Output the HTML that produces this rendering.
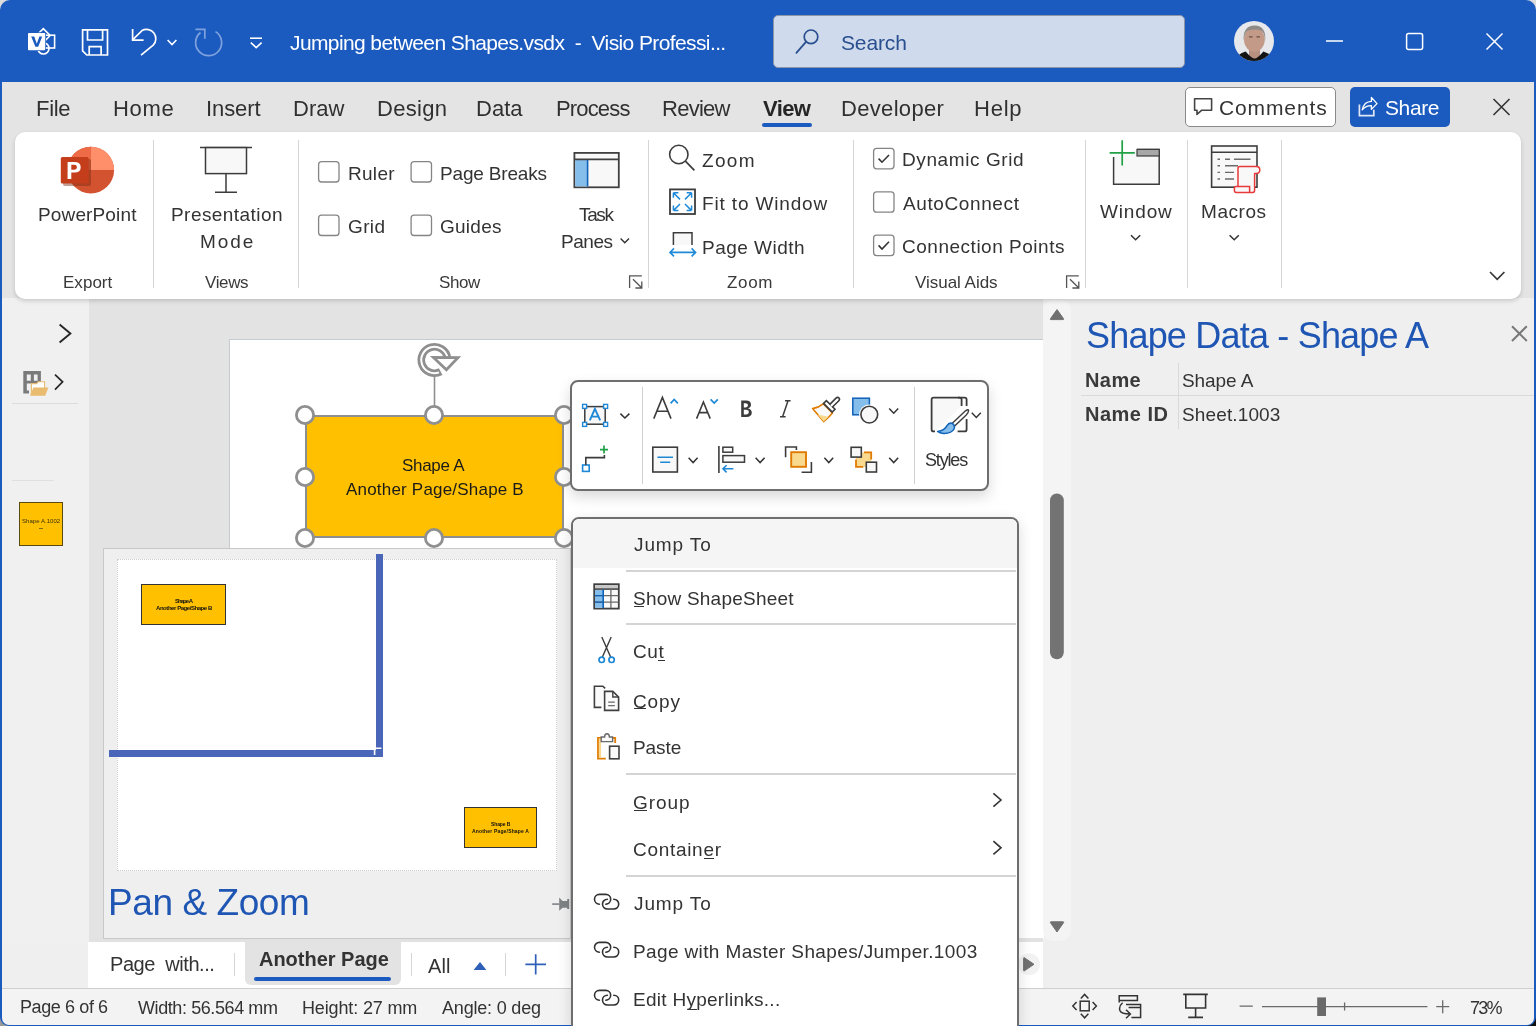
<!DOCTYPE html>
<html><head><meta charset="utf-8"><title>Visio - Jumping between Shapes</title>
<style>
html,body{margin:0;padding:0;width:1536px;height:1026px;overflow:hidden;background:#dcdcdc;}
body{position:relative;-webkit-font-smoothing:antialiased;font-family:'Liberation Sans',sans-serif;}
svg{overflow:visible}
span{will-change:transform}
</style></head><body>
<div style="position:absolute;left:0px;top:1010px;width:16px;height:16px;background:#9a9a9a;"></div>
<div style="position:absolute;left:1520px;top:1010px;width:16px;height:16px;background:#111;"></div>
<div style="position:absolute;left:0px;top:0px;width:1536px;height:1026px;background:#1b5bbf;border-radius:10px 10px 9px 9px;"></div>
<div style="position:absolute;left:2px;top:82px;width:1532px;height:216px;background:#e4e4e4;"></div>
<div style="position:absolute;left:2px;top:298px;width:1532px;height:690px;background:#efefef;"></div>
<div style="position:absolute;left:2px;top:298px;width:87px;height:645px;background:#f0f0f0;"></div>
<div style="position:absolute;left:89px;top:298px;width:954px;height:643px;background:#e3e3e3;"></div>
<div style="position:absolute;left:229px;top:339px;width:814px;height:599px;background:#fff;border-left:1px solid #c6cad1;border-top:1px solid #c6cad1;"></div>
<div style="position:absolute;left:1043px;top:300px;width:28px;height:641px;background:#f4f4f4;border-radius:10px;"></div>
<div style="position:absolute;left:1071px;top:298px;width:463px;height:690px;background:#efefef;"></div>
<div style="position:absolute;left:88px;top:942px;width:955px;height:46px;background:#fff;"></div>
<div style="position:absolute;left:89px;top:938px;width:954px;height:4px;background:#e2e2e2;"></div>
<div style="position:absolute;left:2px;top:988px;width:1532px;height:36px;background:#f3f3f3;border-top:1px solid #cfcfcf;border-radius:0 0 7px 7px;"></div>
<div style="position:absolute;left:15px;top:132px;width:1506px;height:167px;background:#fff;border-radius:10px;box-shadow:0 2px 4px rgba(0,0,0,0.16);"></div>
<span style="position:absolute;left:289.67px;top:32px;font:400 21px/1 'Liberation Sans',sans-serif;color:#ffffff;letter-spacing:-0.607px;white-space:pre;">Jumping between Shapes.vsdx  -  Visio Professi...</span>
<div style="position:absolute;left:773px;top:15px;width:412px;height:53px;background:#cfdaed;border:1px solid #8c96a6;border-radius:5px;box-sizing:border-box;"></div>
<span style="position:absolute;left:841.34px;top:32px;font:400 21px/1 'Liberation Sans',sans-serif;color:#2a4f8f;letter-spacing:-0.140px;white-space:pre;">Search</span>
<span style="position:absolute;left:36.28px;top:98px;font:400 22px/1 'Liberation Sans',sans-serif;color:#303030;letter-spacing:-0.280px;white-space:pre;">File</span>
<span style="position:absolute;left:113.28px;top:98px;font:400 22px/1 'Liberation Sans',sans-serif;color:#303030;letter-spacing:0.642px;white-space:pre;">Home</span>
<span style="position:absolute;left:206.28px;top:98px;font:400 22px/1 'Liberation Sans',sans-serif;color:#303030;letter-spacing:-0.076px;white-space:pre;">Insert</span>
<span style="position:absolute;left:293.28px;top:98px;font:400 22px/1 'Liberation Sans',sans-serif;color:#303030;letter-spacing:0.038px;white-space:pre;">Draw</span>
<span style="position:absolute;left:376.78px;top:98px;font:400 22px/1 'Liberation Sans',sans-serif;color:#303030;letter-spacing:0.295px;white-space:pre;">Design</span>
<span style="position:absolute;left:475.78px;top:98px;font:400 22px/1 'Liberation Sans',sans-serif;color:#303030;letter-spacing:0.036px;white-space:pre;">Data</span>
<span style="position:absolute;left:555.78px;top:98px;font:400 22px/1 'Liberation Sans',sans-serif;color:#303030;letter-spacing:-0.844px;white-space:pre;">Process</span>
<span style="position:absolute;left:662.28px;top:98px;font:400 22px/1 'Liberation Sans',sans-serif;color:#303030;letter-spacing:-0.737px;white-space:pre;">Review</span>
<span style="position:absolute;left:841.28px;top:98px;font:400 22px/1 'Liberation Sans',sans-serif;color:#303030;letter-spacing:0.318px;white-space:pre;">Developer</span>
<span style="position:absolute;left:974.28px;top:98px;font:400 22px/1 'Liberation Sans',sans-serif;color:#303030;letter-spacing:0.788px;white-space:pre;">Help</span>
<span style="position:absolute;left:763.00px;top:98px;font:700 22px/1 'Liberation Sans',sans-serif;color:#262626;letter-spacing:-0.604px;white-space:pre;">View</span>
<div style="position:absolute;left:762px;top:123px;width:50px;height:4px;background:#1b5bbf;border-radius:2px;"></div>
<div style="position:absolute;left:1185px;top:87px;width:151px;height:40px;background:#fff;border:1px solid #8a8a8a;border-radius:5px;box-sizing:border-box;"></div>
<span style="position:absolute;left:1219.02px;top:97px;font:400 21px/1 'Liberation Sans',sans-serif;color:#333333;letter-spacing:0.874px;white-space:pre;">Comments</span>
<div style="position:absolute;left:1350px;top:87px;width:100px;height:40px;background:#1b5bbf;border-radius:5px;"></div>
<span style="position:absolute;left:1385.34px;top:97px;font:400 21px/1 'Liberation Sans',sans-serif;color:#ffffff;letter-spacing:-0.383px;white-space:pre;">Share</span>
<span style="position:absolute;left:37.52px;top:205px;font:400 19px/1 'Liberation Sans',sans-serif;color:#333333;letter-spacing:0.140px;white-space:pre;">PowerPoint</span>
<span style="position:absolute;left:170.52px;top:205px;font:400 19px/1 'Liberation Sans',sans-serif;color:#333333;letter-spacing:0.443px;white-space:pre;">Presentation</span>
<span style="position:absolute;left:199.52px;top:232px;font:400 19px/1 'Liberation Sans',sans-serif;color:#333333;letter-spacing:1.909px;white-space:pre;">Mode</span>
<span style="position:absolute;left:62.67px;top:274px;font:400 17px/1 'Liberation Sans',sans-serif;color:#3a3a3a;letter-spacing:0.028px;white-space:pre;">Export</span>
<span style="position:absolute;left:205.00px;top:274px;font:400 17px/1 'Liberation Sans',sans-serif;color:#3a3a3a;letter-spacing:-0.377px;white-space:pre;">Views</span>
<span style="position:absolute;left:347.52px;top:164px;font:400 19px/1 'Liberation Sans',sans-serif;color:#333333;letter-spacing:0.293px;white-space:pre;">Ruler</span>
<span style="position:absolute;left:439.52px;top:164px;font:400 19px/1 'Liberation Sans',sans-serif;color:#333333;letter-spacing:-0.171px;white-space:pre;">Page Breaks</span>
<span style="position:absolute;left:348.11px;top:217px;font:400 19px/1 'Liberation Sans',sans-serif;color:#333333;letter-spacing:0.354px;white-space:pre;">Grid</span>
<span style="position:absolute;left:440.11px;top:217px;font:400 19px/1 'Liberation Sans',sans-serif;color:#333333;letter-spacing:0.257px;white-space:pre;">Guides</span>
<span style="position:absolute;left:578.70px;top:205px;font:400 19px/1 'Liberation Sans',sans-serif;color:#333333;letter-spacing:-1.356px;white-space:pre;">Task</span>
<span style="position:absolute;left:560.52px;top:232px;font:400 19px/1 'Liberation Sans',sans-serif;color:#333333;letter-spacing:-0.449px;white-space:pre;">Panes</span>
<span style="position:absolute;left:439.47px;top:274px;font:400 17px/1 'Liberation Sans',sans-serif;color:#3a3a3a;letter-spacing:-0.400px;white-space:pre;">Show</span>
<span style="position:absolute;left:702.41px;top:151px;font:400 19px/1 'Liberation Sans',sans-serif;color:#333333;letter-spacing:1.337px;white-space:pre;">Zoom</span>
<span style="position:absolute;left:701.52px;top:194px;font:400 19px/1 'Liberation Sans',sans-serif;color:#333333;letter-spacing:0.847px;white-space:pre;">Fit to Window</span>
<span style="position:absolute;left:701.52px;top:238px;font:400 19px/1 'Liberation Sans',sans-serif;color:#333333;letter-spacing:0.481px;white-space:pre;">Page Width</span>
<span style="position:absolute;left:727.47px;top:274px;font:400 17px/1 'Liberation Sans',sans-serif;color:#3a3a3a;letter-spacing:0.652px;white-space:pre;">Zoom</span>
<span style="position:absolute;left:901.52px;top:150px;font:400 19px/1 'Liberation Sans',sans-serif;color:#333333;letter-spacing:0.589px;white-space:pre;">Dynamic Grid</span>
<span style="position:absolute;left:903.00px;top:194px;font:400 19px/1 'Liberation Sans',sans-serif;color:#333333;letter-spacing:0.608px;white-space:pre;">AutoConnect</span>
<span style="position:absolute;left:902.11px;top:237px;font:400 19px/1 'Liberation Sans',sans-serif;color:#333333;letter-spacing:0.517px;white-space:pre;">Connection Points</span>
<span style="position:absolute;left:915.00px;top:274px;font:400 17px/1 'Liberation Sans',sans-serif;color:#3a3a3a;letter-spacing:-0.026px;white-space:pre;">Visual Aids</span>
<span style="position:absolute;left:1100.00px;top:202px;font:400 19px/1 'Liberation Sans',sans-serif;color:#333333;letter-spacing:0.838px;white-space:pre;">Window</span>
<span style="position:absolute;left:1200.52px;top:202px;font:400 19px/1 'Liberation Sans',sans-serif;color:#333333;letter-spacing:0.558px;white-space:pre;">Macros</span>
<div style="position:absolute;left:153px;top:140px;width:1px;height:148px;background:#d6d6d6;"></div>
<div style="position:absolute;left:298px;top:140px;width:1px;height:148px;background:#d6d6d6;"></div>
<div style="position:absolute;left:648px;top:140px;width:1px;height:148px;background:#d6d6d6;"></div>
<div style="position:absolute;left:853px;top:140px;width:1px;height:148px;background:#d6d6d6;"></div>
<div style="position:absolute;left:1085px;top:140px;width:1px;height:148px;background:#d6d6d6;"></div>
<div style="position:absolute;left:1187px;top:140px;width:1px;height:148px;background:#d6d6d6;"></div>
<div style="position:absolute;left:1281px;top:140px;width:1px;height:148px;background:#d6d6d6;"></div>
<div style="position:absolute;left:12px;top:403px;width:66px;height:1px;background:#dcdcdc;"></div>
<div style="position:absolute;left:12px;top:480px;width:42px;height:1px;background:#e0e0e0;"></div>
<div style="position:absolute;left:19px;top:502px;width:44px;height:44px;background:#ffc000;border:1px solid #5a4a10;box-sizing:border-box;"></div>
<div style="position:absolute;left:305px;top:415px;width:259px;height:123px;background:#ffc000;border:2px solid #8f8f8f;box-sizing:border-box;"></div>
<span style="position:absolute;left:402.47px;top:457px;font:400 17px/1 'Liberation Sans',sans-serif;color:#1a1a1a;letter-spacing:-0.295px;white-space:pre;">Shape A</span>
<span style="position:absolute;left:346.00px;top:481px;font:400 17px/1 'Liberation Sans',sans-serif;color:#1a1a1a;letter-spacing:0.200px;white-space:pre;">Another Page/Shape B</span>
<span style="position:absolute;left:1085.88px;top:318px;font:400 36px/1 'Liberation Sans',sans-serif;color:#1f56b4;letter-spacing:-0.805px;white-space:pre;">Shape Data - Shape A</span>
<span style="position:absolute;left:1084.75px;top:370px;font:700 20px/1 'Liberation Sans',sans-serif;color:#3a3a3a;letter-spacing:0.425px;white-space:pre;">Name</span>
<span style="position:absolute;left:1084.75px;top:404px;font:700 20px/1 'Liberation Sans',sans-serif;color:#3a3a3a;letter-spacing:0.486px;white-space:pre;">Name ID</span>
<span style="position:absolute;left:1182.41px;top:371px;font:400 19px/1 'Liberation Sans',sans-serif;color:#333333;letter-spacing:-0.065px;white-space:pre;">Shape A</span>
<span style="position:absolute;left:1182.41px;top:405px;font:400 19px/1 'Liberation Sans',sans-serif;color:#333333;letter-spacing:0.129px;white-space:pre;">Sheet.1003</span>
<div style="position:absolute;left:1081px;top:395px;width:453px;height:1px;background:#d9d9d9;"></div>
<div style="position:absolute;left:1178px;top:363px;width:1px;height:66px;background:#d9d9d9;"></div>
<div style="position:absolute;left:103px;top:548px;width:468px;height:391px;background:#efefef;border:1px solid #c8c8c8;box-sizing:border-box;"></div>
<div style="position:absolute;left:117px;top:559px;width:440px;height:312px;background:#fff;border:1px dotted #cfcfcf;box-sizing:border-box;"></div>
<div style="position:absolute;left:141px;top:584px;width:85px;height:41px;background:#ffc000;border:1px solid #333;box-sizing:border-box;"></div>
<div style="position:absolute;left:464px;top:807px;width:73px;height:41px;background:#ffc000;border:1px solid #333;box-sizing:border-box;"></div>
<div style="position:absolute;left:376px;top:554px;width:7px;height:203px;background:#4a66b8;"></div>
<div style="position:absolute;left:109px;top:750px;width:274px;height:7px;background:#4a66b8;"></div>
<span style="position:absolute;left:108.11px;top:884px;font:400 37px/1 'Liberation Sans',sans-serif;color:#1f56b4;letter-spacing:-0.427px;white-space:pre;">Pan &amp; Zoom</span>
<svg style="position:absolute;left:360px;top:735px;" width="40" height="30" viewBox="0 0 40 30" fill="none"><path d="M16 13.3 H21.4 M14.6 14 V20" stroke="#fff" stroke-width="1.6"/></svg>
<span style="position:absolute;left:109.94px;top:954px;font:400 20px/1 'Liberation Sans',sans-serif;color:#333333;letter-spacing:-0.432px;white-space:pre;">Page  with...</span>
<div style="position:absolute;left:234px;top:953px;width:1px;height:23px;background:#d6d6d6;"></div>
<div style="position:absolute;left:245px;top:942px;width:156px;height:43px;background:#e3e3e3;border-radius:0 0 6px 6px;"></div>
<span style="position:absolute;left:258.69px;top:949px;font:700 20px/1 'Liberation Sans',sans-serif;color:#333333;letter-spacing:-0.019px;white-space:pre;">Another Page</span>
<div style="position:absolute;left:254px;top:977px;width:137px;height:4px;background:#1b5bbf;border-radius:2px;"></div>
<div style="position:absolute;left:411px;top:953px;width:1px;height:23px;background:#d6d6d6;"></div>
<span style="position:absolute;left:428.00px;top:956px;font:400 20px/1 'Liberation Sans',sans-serif;color:#333333;letter-spacing:0.046px;white-space:pre;">All</span>
<div style="position:absolute;left:505px;top:953px;width:1px;height:23px;background:#d6d6d6;"></div>
<span style="position:absolute;left:19.59px;top:998px;font:400 18px/1 'Liberation Sans',sans-serif;color:#333;letter-spacing:-0.394px;white-space:pre;">Page 6 of 6</span>
<span style="position:absolute;left:138.00px;top:999px;font:400 18px/1 'Liberation Sans',sans-serif;color:#333;letter-spacing:-0.408px;white-space:pre;">Width: 56.564 mm</span>
<span style="position:absolute;left:301.59px;top:999px;font:400 18px/1 'Liberation Sans',sans-serif;color:#333;letter-spacing:-0.142px;white-space:pre;">Height: 27 mm</span>
<span style="position:absolute;left:442.00px;top:999px;font:400 18px/1 'Liberation Sans',sans-serif;color:#333;letter-spacing:-0.188px;white-space:pre;">Angle: 0 deg</span>
<span style="position:absolute;left:1470.16px;top:999px;font:400 18px/1 'Liberation Sans',sans-serif;color:#333;letter-spacing:-1.823px;white-space:pre;">73%</span>
<svg style="position:absolute;left:0px;top:0px;" width="80" height="70" viewBox="0 0 80 70" fill="none">
<path d="M43.3 28.6 L50.2 35.5 L43.3 42.4 L36.4 35.5 Z" stroke="#fff" stroke-width="1.6"/>
<rect x="45" y="35.2" width="9.6" height="12.8" stroke="#fff" stroke-width="1.6"/>
<circle cx="43.4" cy="48.4" r="5.6" stroke="#fff" stroke-width="1.6"/>
<rect x="28" y="33" width="17.2" height="17.2" fill="#fff" rx="0.8" stroke="#1b5bbf" stroke-width="1.4" paint-order="stroke"/>
<path d="M31.2 36.4 L35.4 46.8 H38.2 L42.2 36.4 H39.4 L36.8 43.8 L34.2 36.4 Z" fill="#1b5bbf"/>
</svg>
<svg style="position:absolute;left:0px;top:0px;" width="120" height="70" viewBox="0 0 120 70" fill="none">
<path d="M82.6 29.9 H107.5 V55 H86.8 L82.6 50.8 Z" stroke="#fff" stroke-width="1.7" stroke-linejoin="miter"/>
<path d="M87.5 29.9 V40 H102.6 V29.9" stroke="#fff" stroke-width="1.7"/>
<path d="M89.2 55 V46.7 H101.1 V55" stroke="#fff" stroke-width="1.7"/>
</svg>
<svg style="position:absolute;left:0px;top:0px;" width="190" height="70" viewBox="0 0 190 70" fill="none">
<path d="M132.6 29 V40.2 H143.6" stroke="#fff" stroke-width="1.7"/>
<path d="M132.8 39.6 L142 30.6 A9.3 9.3 0 0 1 153.2 45.2 L141 55.2" stroke="#fff" stroke-width="1.7"/>
<path d="M167.6 40 L172 44.5 L176.4 40" stroke="#fff" stroke-width="1.6"/>
</svg>
<svg style="position:absolute;left:0px;top:0px;" width="270" height="70" viewBox="0 0 270 70" fill="none">
<path d="M215.5 31.6 A13 13 0 1 1 200.5 32.5" stroke="#7fa2de" stroke-width="1.7"/>
<path d="M195.4 29.4 H204.8 V38.8" stroke="#7fa2de" stroke-width="1.7"/>
<path d="M250 38.2 H262" stroke="#fff" stroke-width="1.6"/>
<path d="M250.8 42.6 L256.2 47.6 L261.6 42.6" stroke="#fff" stroke-width="1.6"/>
</svg>
<svg style="position:absolute;left:780px;top:20px;" width="50" height="40" viewBox="0 0 50 40" fill="none">
<circle cx="31" cy="16.8" r="6.8" stroke="#2a4f8f" stroke-width="1.7"/>
<path d="M26.2 21.6 L16.4 32.8" stroke="#2a4f8f" stroke-width="1.8" stroke-linecap="round"/>
</svg>
<svg style="position:absolute;left:1230px;top:17px;" width="50" height="50" viewBox="0 0 50 50" fill="none">
<defs><clipPath id="av"><circle cx="24" cy="24" r="20"/></clipPath></defs>
<g clip-path="url(#av)">
<rect x="0" y="0" width="50" height="50" fill="#e6e8eb"/>
<rect x="19" y="30" width="11" height="12" fill="#b89080"/>
<ellipse cx="24.4" cy="22.6" rx="10.4" ry="12.2" fill="#c39a88"/>
<path d="M13.6 24 Q12.6 9 24.6 8.6 Q36.4 9 35.2 24 Q34.4 15 31 13.6 Q25 11.6 18 13.6 Q14.6 15 13.6 24 Z" fill="#8d8a87"/>
<path d="M19 19.8 H22.6 M26.4 19.8 H30" stroke="#6e5247" stroke-width="1.2"/>
<path d="M2 50 Q4 38 15.6 34.4 Q22 41.6 24.6 41.6 Q27.2 41.6 33.4 34.4 Q45 38 47 50 Z" fill="#141414"/>
</g></svg>
<svg style="position:absolute;left:1320px;top:25px;" width="200" height="40" viewBox="0 0 200 40" fill="none">
<path d="M6 16 H23" stroke="#fff" stroke-width="1.5"/>
<rect x="86.6" y="8.6" width="16" height="16" rx="2" stroke="#fff" stroke-width="1.5"/>
<path d="M166.5 8.5 L182.5 24.5 M182.5 8.5 L166.5 24.5" stroke="#fff" stroke-width="1.5"/>
</svg>
<svg style="position:absolute;left:1185px;top:85px;" width="350" height="45" viewBox="0 0 350 45" fill="none">
<path d="M9.6 13.8 H26.6 V25.2 H16.8 L12 29.4 V25.2 H9.6 Z" stroke="#444" stroke-width="1.6" stroke-linejoin="round"/>
<path d="M174.4 19.4 V30.6 H188.8 V24.8" stroke="#dfe7f5" stroke-width="1.7"/>
<path d="M177.2 24.8 Q179 16.6 186.4 16.4 V12.4 L192 18.6 L186.4 24.4 V20.6 Q180.6 20.6 177.2 24.8 Z" stroke="#fff" stroke-width="1.3" stroke-linejoin="round"/>
<path d="M308.5 14 L324.5 30 M324.5 14 L308.5 30" stroke="#333" stroke-width="1.6"/>
</svg>
<svg style="position:absolute;left:0px;top:0px;" width="700" height="300" viewBox="0 0 700 300" fill="none">
<!-- PowerPoint -->
<circle cx="90.8" cy="170.1" r="23.3" fill="#d35230"/>
<path d="M90.8 170.1 V146.8 A23.3 23.3 0 0 1 114.1 170.1 Z" fill="#ff8f6b"/>
<path d="M90.8 170.1 V146.8 A23.3 23.3 0 0 0 67.5 170.1 Z" fill="#ed6c47"/>
<rect x="63" y="159" width="28" height="27" rx="2" fill="#7a2a12" opacity="0.45"/>
<rect x="60.8" y="157" width="27.8" height="26.6" rx="1.6" fill="#c43e1c"/>
<path d="M67.6 178.9 V161.9 H74.4 Q80.7 161.9 80.7 167.3 Q80.7 172.6 74.4 172.6 H71.3 V178.9 Z M71.3 164.8 V169.7 H73.9 Q76.9 169.7 76.9 167.25 Q76.9 164.8 73.9 164.8 Z" fill="#fff" fill-rule="evenodd"/>
<!-- Presentation mode -->
<path d="M200 147.6 H252" stroke="#3c3c3c" stroke-width="1.5"/>
<rect x="205.5" y="147.6" width="41" height="26" fill="#f8f8f8" stroke="#3c3c3c" stroke-width="1.5"/>
<path d="M226 173.6 V192 M215 192.2 H237" stroke="#3c3c3c" stroke-width="1.5"/>
<!-- checkboxes -->
<rect x="318.6" y="161.6" width="20.4" height="20.4" rx="3" stroke="#858585" stroke-width="1.3"/>
<rect x="411.1" y="161.6" width="20.4" height="20.4" rx="3" stroke="#858585" stroke-width="1.3"/>
<rect x="318.6" y="215.1" width="20.4" height="20.4" rx="3" stroke="#858585" stroke-width="1.3"/>
<rect x="411.1" y="215.1" width="20.4" height="20.4" rx="3" stroke="#858585" stroke-width="1.3"/>
<!-- task panes -->
<rect x="574.4" y="152.9" width="44.4" height="34.4" fill="#f8f8f8" stroke="#404040" stroke-width="1.8"/>
<rect x="575.3" y="159.8" width="12" height="26.6" fill="#85bdeb"/>
<path d="M574.4 159.4 H618.8" stroke="#404040" stroke-width="1.6"/>
<path d="M587.6 160 V186.5" stroke="#0f62b8" stroke-width="1.6"/>
<path d="M620.6 238.6 L624.8 242.8 L629 238.6" stroke="#333" stroke-width="1.4"/>
<!-- launcher show -->
<path d="M629.6 288 V275.8 H641.8" stroke="#555" stroke-width="1.3"/>
<path d="M633 279.2 L641.6 287.8 M641.8 281.6 V288 H635.4" stroke="#555" stroke-width="1.3"/>
<!-- zoom -->
<circle cx="678.8" cy="154.5" r="9.2" stroke="#3c3c3c" stroke-width="1.6"/>
<path d="M685.4 161.1 L694.4 170.3" stroke="#3c3c3c" stroke-width="1.7"/>
<!-- fit to window -->
<rect x="670" y="189.4" width="25" height="24.6" stroke="#3c3c3c" stroke-width="1.8"/>
<path d="M673.4 192.8 L680 199.4 M673.4 192.8 H678.4 M673.4 192.8 V197.8
 M691.6 192.8 L685 199.4 M691.6 192.8 H686.6 M691.6 192.8 V197.8
 M673.4 210.6 L680 204 M673.4 210.6 H678.4 M673.4 210.6 V205.6
 M691.6 210.6 L685 204 M691.6 210.6 H686.6 M691.6 210.6 V205.6" stroke="#1f8ad8" stroke-width="1.5"/>
<!-- page width -->
<path d="M673.4 245 V232.8 H692 V245" stroke="#3c3c3c" stroke-width="1.5" fill="#f8f8f8"/>
<path d="M670 252.4 H695.6 M674 248.4 L670 252.4 L674 256.4 M691.6 248.4 L695.6 252.4 L691.6 256.4" stroke="#1f8ad8" stroke-width="1.6"/>
</svg>
<svg style="position:absolute;left:0px;top:0px;" width="1536" height="300" viewBox="0 0 1536 300" fill="none">
<!-- visual aids checkboxes -->
<rect x="873.6" y="148.4" width="20.4" height="20.4" rx="3" stroke="#858585" stroke-width="1.3"/>
<path d="M878.6 158.6 L882 162.2 L889 155" stroke="#333" stroke-width="1.6"/>
<rect x="873.6" y="191.8" width="20.4" height="20.4" rx="3" stroke="#858585" stroke-width="1.3"/>
<rect x="873.6" y="235.2" width="20.4" height="20.4" rx="3" stroke="#858585" stroke-width="1.3"/>
<path d="M878.6 245.4 L882 249 L889 241.8" stroke="#333" stroke-width="1.6"/>
<!-- launcher visual aids -->
<path d="M1066.6 288 V275.8 H1078.8" stroke="#555" stroke-width="1.3"/>
<path d="M1070 279.2 L1078.6 287.8 M1078.8 281.6 V288 H1072.4" stroke="#555" stroke-width="1.3"/>
<!-- window -->
<path d="M1113.6 157 V184.2 H1159.2 V149.4 H1137" stroke="#3c3c3c" stroke-width="1.5" fill="#f8f8f8"/>
<rect x="1137" y="149.4" width="22.2" height="6.6" fill="#a8a8a8" stroke="#3c3c3c" stroke-width="1.2"/>
<path d="M1109.6 152.8 H1134.8 M1122.2 140.2 V165.4" stroke="#22a045" stroke-width="1.7"/>
<path d="M1131 235.2 L1135.6 239.8 L1140.2 235.2" stroke="#333" stroke-width="1.5"/>
<!-- macros -->
<rect x="1211.6" y="146" width="45.4" height="41.2" fill="#f8f8f8" stroke="#3c3c3c" stroke-width="1.6"/>
<path d="M1211.6 152.2 H1257" stroke="#3c3c3c" stroke-width="1.6"/>
<path d="M1217.5 159.2 H1220 M1225 159.2 H1230 M1234 159.2 H1250.5 M1217.5 165.8 H1220 M1225 165.8 H1238 M1217.5 172.4 H1220 M1225 172.4 H1234 M1217.5 179 H1220 M1225 179 H1234" stroke="#6a6a6a" stroke-width="1.4"/>
<path d="M1238 168 Q1238 166.6 1240 166.6 H1256.4 Q1259.8 166.6 1259.8 170 Q1259.8 173.4 1256.4 173.4 H1254.6 V190.6 Q1254.6 192.4 1252.8 192.4 H1236.2 Q1234.4 192.4 1234.4 190.6 V188 Q1234.4 186.6 1236 186.6 H1238 Z" fill="#f8f8f8" stroke="#e83a3a" stroke-width="1.5" stroke-linejoin="round"/>
<path d="M1249.6 192.2 V186.6 H1238" stroke="#e83a3a" stroke-width="1.5"/>
<path d="M1229.6 235.2 L1234.2 239.8 L1238.8 235.2" stroke="#333" stroke-width="1.5"/>
<!-- collapse ribbon -->
<path d="M1490 272 L1497.2 279.4 L1504.4 272" stroke="#333" stroke-width="1.6"/>
</svg>
<svg style="position:absolute;left:0px;top:0px;" width="1536" height="1026" viewBox="0 0 1536 1026" fill="none">
<!-- shape data close -->
<path d="M1512 326.2 L1526.8 341 M1526.8 326.2 L1512 341" stroke="#787878" stroke-width="2"/>
<!-- scroll arrows -->
<path d="M1057 309.6 L1063.6 318.8 Q1064 319.6 1063 319.6 H1051 Q1050 319.6 1050.4 318.8 Z" fill="#707070" stroke="#707070" stroke-width="1" stroke-linejoin="round"/>
<rect x="1050" y="493.5" width="13.8" height="165.7" rx="6.9" fill="#737373"/>
<path d="M1057 932 L1063.6 922.6 Q1064 921.8 1063 921.8 H1051 Q1050 921.8 1050.4 922.6 Z" fill="#707070" stroke="#707070" stroke-width="1" stroke-linejoin="round"/>
<circle cx="1029" cy="964.3" r="11" fill="#f2f2f2"/>
<path d="M1034 964.3 L1024.4 957.8 Q1023.6 957.4 1023.6 958.4 V970.2 Q1023.6 971.2 1024.4 970.8 Z" fill="#707070" stroke="#707070" stroke-width="1" stroke-linejoin="round"/>
<!-- pan zoom pin -->
<path d="M552.2 904.1 H559.5" stroke="#7f8386" stroke-width="1.6"/>
<path d="M559.2 897.6 L562.6 901 H568 V907.8 H562.6 L559.2 910.7 Z" fill="#7f8386"/>
<rect x="567.2" y="899" width="2" height="10" fill="#7f8386"/>
<!-- page tabs -->
<path d="M473.6 970 L480 962 L486.4 970 Z" fill="#2f5fb8"/>
<path d="M525.4 964.4 H546 M535.7 954.2 V974.6" stroke="#2f5fb8" stroke-width="1.7"/>
<!-- status bar icons -->
<rect x="1080.2" y="1001.2" width="9" height="9.6" stroke="#333" stroke-width="1.5"/>
<path d="M1080.8 998.4 L1084.6 994.4 L1088.4 998.4 M1080.8 1013.8 L1084.6 1017.8 L1088.4 1013.8 M1076.6 1002 L1072.8 1006 L1076.6 1010 M1092.6 1002 L1096.4 1006 L1092.6 1010" stroke="#333" stroke-width="1.5"/>
<path d="M1119.2 1002.6 V995.8 H1137.4 V1001.2 M1119.2 1000.6 H1137.4" stroke="#333" stroke-width="1.5"/>
<path d="M1126 1004.4 H1140.6 V1017.4 H1131.4 M1128.6 1007.6 H1140.6" stroke="#333" stroke-width="1.5"/>
<path d="M1122.6 1002.8 Q1118.8 1006 1119.8 1010.2 Q1121 1014 1130 1014 M1126 1009.8 L1130.4 1014 L1126 1018.2" stroke="#333" stroke-width="1.5"/>
<path d="M1183.2 994.4 H1207.8 M1185.8 994.4 V1008 H1205.6 V994.4 M1195.6 1008 V1017.2 M1188.2 1017.4 H1203" stroke="#333" stroke-width="1.6"/>
<path d="M1239.6 1006.2 H1252.8 M1262 1006.6 H1427.4 M1344.6 1002.6 V1010.6 M1436.2 1006.6 H1449.2 M1442.7 1000.2 V1013.2" stroke="#6a6a6a" stroke-width="1.3"/>
<rect x="1317.2" y="997.4" width="8.8" height="18.6" fill="#6a6a6a"/>
</svg>
<span style="position:absolute;left:174.91px;top:598px;font:700 6px/1 'Liberation Sans',sans-serif;color:#111;letter-spacing:-0.966px;white-space:pre;">Shape A</span>
<span style="position:absolute;left:155.91px;top:605px;font:700 6px/1 'Liberation Sans',sans-serif;color:#111;letter-spacing:-0.441px;white-space:pre;">Another Page/Shape B</span>
<span style="position:absolute;left:490.92px;top:822px;font:700 5px/1 'Liberation Sans',sans-serif;color:#111;letter-spacing:-0.126px;white-space:pre;">Shape B</span>
<span style="position:absolute;left:471.92px;top:829px;font:700 5px/1 'Liberation Sans',sans-serif;color:#111;letter-spacing:0.172px;white-space:pre;">Another Page/Shape A</span>
<svg style="position:absolute;left:0px;top:290px;" width="100" height="270" viewBox="0 0 100 270" fill="none">
<path d="M59.6 34.6 L70.4 43.6 L59.6 52.6" stroke="#262626" stroke-width="1.9"/>
<path d="M23.3 81.1 H40.9 V93.4 H26.8 V100.4 H29 V103.5 H23.3 Z M26.8 84.6 V90.8 H30.8 V84.6 Z M33.9 84.6 V90.8 H37.6 V84.6 Z" fill="#7a7a7a" fill-rule="evenodd"/>
<path d="M31.4 104 V93.6 H36.6 L38.2 91.8 H44.6 V98" fill="#fff" stroke="#e8bb6f" stroke-width="1.1"/>
<path d="M30 105.7 L33.4 97.6 H48.4 L45.2 105.7 Z" fill="#e8bb6f"/>
<path d="M55 84.6 L62.6 91.8 L55 99.6" stroke="#262626" stroke-width="1.7"/>
</svg>
<span style="position:absolute;left:21.81px;top:518px;font:400 6px/1 'Liberation Sans',sans-serif;color:#3a3010;letter-spacing:0.036px;white-space:pre;">Shape A.1002</span>
<div style="position:absolute;left:39px;top:528px;width:4px;height:1px;background:#8a6a10;"></div>
<svg style="position:absolute;left:380px;top:330px;" width="220" height="230" viewBox="0 0 220 230" fill="none">
<path d="M60.7 41.65 A13.2 13.2 0 1 1 67.57 28.16" stroke="#8f8f8f" stroke-width="7.6"/>
<path d="M59.01 42.4 A13.2 13.2 0 1 1 67.31 26.81" stroke="#fff" stroke-width="2"/>
<path d="M53.4 27.4 L78 27.6 L66.4 39.8 Z" fill="#fff" stroke="#8f8f8f" stroke-width="2.8" stroke-linejoin="miter"/>
<path d="M54.5 46.5 V76" stroke="#8f8f8f" stroke-width="1.6"/>
</svg>
<svg style="position:absolute;left:280px;top:390px;" width="310" height="170" viewBox="0 0 310 170" fill="none"><circle cx="25" cy="25" r="8.6" fill="#fff" stroke="#8f8f8f" stroke-width="2.8"/><circle cx="154" cy="25" r="8.6" fill="#fff" stroke="#8f8f8f" stroke-width="2.8"/><circle cx="284" cy="25" r="8.6" fill="#fff" stroke="#8f8f8f" stroke-width="2.8"/><circle cx="25" cy="87" r="8.6" fill="#fff" stroke="#8f8f8f" stroke-width="2.8"/><circle cx="284" cy="87" r="8.6" fill="#fff" stroke="#8f8f8f" stroke-width="2.8"/><circle cx="25" cy="148" r="8.6" fill="#fff" stroke="#8f8f8f" stroke-width="2.8"/><circle cx="154" cy="148" r="8.6" fill="#fff" stroke="#8f8f8f" stroke-width="2.8"/><circle cx="284" cy="148" r="8.6" fill="#fff" stroke="#8f8f8f" stroke-width="2.8"/></svg>
<div style="position:absolute;left:570px;top:380px;width:419px;height:111px;background:#fff;border:2px solid #6e6e6e;border-radius:8px;box-sizing:border-box;box-shadow:0 6px 14px rgba(0,0,0,0.15);"></div>
<div style="position:absolute;left:642px;top:387px;width:1px;height:97px;background:#d0d0d0;"></div>
<div style="position:absolute;left:914px;top:387px;width:1px;height:97px;background:#d0d0d0;"></div>
<span style="position:absolute;left:925.44px;top:451px;font:400 18px/1 'Liberation Sans',sans-serif;color:#333333;letter-spacing:-1.178px;white-space:pre;">Styles</span>
<div style="position:absolute;left:571px;top:517px;width:448px;height:520px;background:#fff;border:2px solid #6e6e6e;border-radius:8px;box-sizing:border-box;box-shadow:0 4px 14px rgba(0,0,0,0.14);"></div>
<div style="position:absolute;left:573px;top:519px;width:444px;height:49px;background:#f5f5f5;border-radius:6px 6px 0 0;"></div>
<div style="position:absolute;left:626px;top:570px;width:390px;height:2px;background:#d4d4d4;"></div>
<div style="position:absolute;left:626px;top:623px;width:390px;height:2px;background:#d4d4d4;"></div>
<div style="position:absolute;left:626px;top:773px;width:390px;height:2px;background:#d4d4d4;"></div>
<div style="position:absolute;left:626px;top:875px;width:390px;height:2px;background:#d4d4d4;"></div>
<span style="position:absolute;left:633.70px;top:535px;font:400 19px/1 'Liberation Sans',sans-serif;color:#333333;letter-spacing:0.877px;white-space:pre;">Jump To</span>
<span style="position:absolute;left:633.41px;top:589px;font:400 19px/1 'Liberation Sans',sans-serif;color:#333333;letter-spacing:0.224px;white-space:pre;">Show ShapeSheet</span>
<span style="position:absolute;left:633.11px;top:642px;font:400 19px/1 'Liberation Sans',sans-serif;color:#333333;letter-spacing:0.629px;white-space:pre;">Cut</span>
<span style="position:absolute;left:633.11px;top:692px;font:400 19px/1 'Liberation Sans',sans-serif;color:#333333;letter-spacing:0.845px;white-space:pre;">Copy</span>
<span style="position:absolute;left:632.52px;top:738px;font:400 19px/1 'Liberation Sans',sans-serif;color:#333333;letter-spacing:-0.083px;white-space:pre;">Paste</span>
<span style="position:absolute;left:633.11px;top:793px;font:400 19px/1 'Liberation Sans',sans-serif;color:#333333;letter-spacing:0.964px;white-space:pre;">Group</span>
<span style="position:absolute;left:633.11px;top:840px;font:400 19px/1 'Liberation Sans',sans-serif;color:#333333;letter-spacing:0.700px;white-space:pre;">Container</span>
<span style="position:absolute;left:633.70px;top:894px;font:400 19px/1 'Liberation Sans',sans-serif;color:#333333;letter-spacing:0.877px;white-space:pre;">Jump To</span>
<span style="position:absolute;left:632.52px;top:942px;font:400 19px/1 'Liberation Sans',sans-serif;color:#333333;letter-spacing:0.371px;white-space:pre;">Page with Master Shapes/Jumper.1003</span>
<span style="position:absolute;left:632.52px;top:990px;font:400 19px/1 'Liberation Sans',sans-serif;color:#333333;letter-spacing:0.274px;white-space:pre;">Edit Hyperlinks...</span>
<svg style="position:absolute;left:0px;top:0px;" width="1536" height="1026" viewBox="0 0 1536 1026" fill="none">
<!-- text box -->
<rect x="584.8" y="406.6" width="20.4" height="17.6" fill="#f8f8f8" stroke="#3c3c3c" stroke-width="1.5"/>
<path d="M589.8 420.4 L594.9 408.8 L600.2 420.4 M591.6 416.6 H598.4" stroke="#1e88d6" stroke-width="1.9"/>
<rect x="582.6" y="404.4" width="4" height="4" fill="#fff" stroke="#1e88d6" stroke-width="1.4"/>
<rect x="603.6" y="404.4" width="4" height="4" fill="#fff" stroke="#1e88d6" stroke-width="1.4"/>
<rect x="582.6" y="422.4" width="4" height="4" fill="#fff" stroke="#1e88d6" stroke-width="1.4"/>
<rect x="603.6" y="422.4" width="4" height="4" fill="#fff" stroke="#1e88d6" stroke-width="1.4"/>
<path d="M620.4 413.6 L624.9 418 L629.4 413.6" stroke="#333" stroke-width="1.5"/>
<!-- connector -->
<rect x="582.6" y="465" width="6.6" height="6.4" stroke="#1e88d6" stroke-width="1.6" fill="#fff"/>
<path d="M585.8 465 V457.6 H604.4 V455" stroke="#3c3c3c" stroke-width="1.6"/>
<path d="M600 449.6 H608 M604 445.6 V453.6" stroke="#22a045" stroke-width="1.7"/>
<!-- grow font -->
<path d="M653.8 418.6 L662.4 397.4 L671 418.6 M657 411.2 H667.8" stroke="#3c3c3c" stroke-width="1.6"/>
<path d="M670.6 403.4 L674.2 399.4 L677.8 403.4" stroke="#1e88d6" stroke-width="1.7"/>
<!-- shrink font -->
<path d="M696.6 418.6 L703.4 402 L710.2 418.6 M699.2 412.6 H707.8" stroke="#3c3c3c" stroke-width="1.6"/>
<path d="M710.6 399.4 L714.2 403 L717.8 399.4" stroke="#1e88d6" stroke-width="1.7"/>
<!-- bold / italic -->
<path d="M741.2 400.6 H746 Q751 400.6 751 404.8 Q751 407.6 748 408.4 Q751.8 409.2 751.8 412.6 Q751.8 417 746.4 417 H741.2 Z M743.8 403.2 V407.4 H745.6 Q748 407.4 748 405.3 Q748 403.2 745.6 403.2 Z M743.8 409.8 V414.4 H746 Q748.8 414.4 748.8 412.1 Q748.8 409.8 746 409.8 Z" fill="#3c3c3c" fill-rule="evenodd"/>
<path d="M785 400.8 H790.6 M780 416.8 H785.6 M788 400.8 L782.6 416.8" stroke="#3c3c3c" stroke-width="1.5"/>
<!-- format painter -->
<path d="M812.6 408.6 Q818.6 407.6 823.2 403.8 L832.4 413 Q828.4 418 823.6 421.6 Z" fill="#fafafa" stroke="#e07b00" stroke-width="1.6" stroke-linejoin="round"/>
<path d="M817.6 414.4 L828.6 416.8 L823.6 421.4 Z" fill="#f8d98e"/>
<path d="M823.6 403.4 L826.4 400.6 L835 409.2 L832.2 412 Z" fill="#fff" stroke="#3c3c3c" stroke-width="1.6"/>
<path d="M829.6 404.6 L836 398.2 Q837.8 396.6 839 398 Q840.2 399.4 838.6 401 L832.2 407.2" fill="#fff" stroke="#3c3c3c" stroke-width="1.6"/>
<!-- fill / shape -->
<rect x="852.8" y="398.2" width="16.6" height="16.6" fill="#85bdeb" stroke="#0f62b8" stroke-width="1.5"/>
<circle cx="869.3" cy="414.6" r="10.2" fill="#fff"/>
<circle cx="869.3" cy="414.6" r="8.4" fill="#f8f8f8" stroke="#3c3c3c" stroke-width="1.6"/>
<path d="M889.2 408.6 L893.7 413.2 L898.2 408.6" stroke="#333" stroke-width="1.5"/>
<!-- text align -->
<rect x="652.8" y="447.2" width="24.6" height="24.8" fill="#f8f8f8" stroke="#3c3c3c" stroke-width="1.6"/>
<path d="M657.4 457.2 H673 M660.2 462.2 H670.2" stroke="#1e88d6" stroke-width="1.6"/>
<path d="M688.6 457.8 L693.1 462.6 L697.6 457.8" stroke="#333" stroke-width="1.5"/>
<!-- align -->
<path d="M718.9 446 V473" stroke="#3c3c3c" stroke-width="1.6"/>
<rect x="722.9" y="447.2" width="9.8" height="5" fill="#f8f8f8" stroke="#3c3c3c" stroke-width="1.5"/>
<rect x="722.9" y="455.6" width="21.6" height="6.6" fill="#f8f8f8" stroke="#3c3c3c" stroke-width="1.5"/>
<path d="M723 468.8 H733.4 M726.6 465.2 L723 468.8 L726.6 472.4" stroke="#1e88d6" stroke-width="1.6"/>
<path d="M755.6 457.8 L760.1 462.6 L764.6 457.8" stroke="#333" stroke-width="1.5"/>
<!-- bring forward -->
<path d="M785.6 457.2 V447 H796.4 V450" stroke="#3c3c3c" stroke-width="1.6"/>
<path d="M801.6 472.2 H811.4 V462" stroke="#3c3c3c" stroke-width="1.6"/>
<rect x="791.2" y="452.2" width="14.8" height="14.6" fill="#f8d98e" stroke="#e07b00" stroke-width="1.9"/>
<path d="M824.4 457.8 L828.8 462.6 L833.2 457.8" stroke="#333" stroke-width="1.5"/>
<!-- group -->
<rect x="856" y="452.4" width="15.2" height="14.6" fill="#f8d98e"/>
<path d="M864 452.4 H871.2 V459.4 M856 459.6 V466.8 H863.2" stroke="#e07b00" stroke-width="1.8"/>
<rect x="851.1" y="447.3" width="10.2" height="9.8" fill="#f8f8f8" stroke="#3c3c3c" stroke-width="1.6"/>
<rect x="866.3" y="462.2" width="10.2" height="9.8" fill="#f8f8f8" stroke="#3c3c3c" stroke-width="1.6"/>
<path d="M889.2 457.8 L893.7 462.6 L898.2 457.8" stroke="#333" stroke-width="1.5"/>
<!-- styles -->
<path d="M961.6 406 V399.6 Q961.6 397.6 959.6 397.6 H933.6 Q931.6 397.6 931.6 399.6 V429.4 Q931.6 431.4 933.6 431.4 H935" stroke="#3c3c3c" stroke-width="1.8" fill="#f8f8f8"/>
<path d="M957.6 431.4 H964.6 Q966.6 431.4 966.6 429.4 V419" stroke="#3c3c3c" stroke-width="1.8"/>
<path d="M966.6 406 V399.6 Q966.6 397.6 964.6 397.6 H958" stroke="#3c3c3c" stroke-width="1.8"/>
<path d="M951 424.4 L965 411.2 Q968.4 408.6 968.6 410.6 Q968.6 412.6 966 415.2 L953.6 427" fill="#fff" stroke="#3c3c3c" stroke-width="1.4"/>
<path d="M937.6 431.4 Q944.6 430.6 947 425.6 Q949.4 422 952.6 423.6 Q955.4 425.6 954 429 Q951.6 433.6 943.6 433.4 Q939.6 433.2 937.6 431.4 Z" fill="#85bdeb" stroke="#0f62b8" stroke-width="1.5" stroke-linejoin="round"/>
<path d="M971.8 412.8 L976.3 417.4 L980.8 412.8" stroke="#333" stroke-width="1.5"/>
</svg>
<svg style="position:absolute;left:0px;top:0px;" width="1536" height="1026" viewBox="0 0 1536 1026" fill="none">
<!-- shapesheet -->
<rect x="594.2" y="584.2" width="24.6" height="24.4" fill="#fafafa" stroke="#404040" stroke-width="1.8"/>
<rect x="595" y="585" width="23" height="4" fill="#c8c8c8"/>
<rect x="595" y="589.6" width="8" height="18.2" fill="#85bdeb"/>
<path d="M594.6 589.1 H618.6" stroke="#404040" stroke-width="1.5"/>
<path d="M595 595.6 H618.4 M595 602.2 H618.4" stroke="#6a6a6a" stroke-width="1.3"/>
<path d="M595 595.6 H603 M595 602.2 H603" stroke="#0f62b8" stroke-width="1.3"/>
<path d="M610.9 589.6 V608" stroke="#6a6a6a" stroke-width="1.3"/>
<path d="M603.2 589.4 V608.2" stroke="#0f62b8" stroke-width="1.6"/>
<!-- cut -->
<path d="M601.8 637 L610.6 657 M611.2 637 L602.4 657" stroke="#3c3c3c" stroke-width="1.4"/>
<circle cx="601.7" cy="659.8" r="2.7" fill="#fff" stroke="#1e88d6" stroke-width="1.7"/>
<circle cx="611.6" cy="659.8" r="2.7" fill="#fff" stroke="#1e88d6" stroke-width="1.7"/>
<!-- copy -->
<path d="M601.4 707.4 H594.4 V686.2 H602.8 L605.2 688.4" stroke="#404040" stroke-width="1.6" fill="#fafafa"/>
<path d="M604.6 691.4 H612.8 L618.6 697 V710.4 H604.6 Z" fill="#fafafa" stroke="#404040" stroke-width="1.6" stroke-linejoin="miter"/>
<path d="M612.8 691.4 V697 H618.6" stroke="#404040" stroke-width="1.4"/>
<path d="M608.2 702.2 H614.8 M608.2 705.6 H614.8" stroke="#6a6a6a" stroke-width="1.2"/>
<!-- paste -->
<path d="M605.8 758.6 H598 V737.8 H601 M612.8 737.8 H615.2 V743" stroke="#e07b00" stroke-width="1.8" fill="none"/>
<rect x="598.9" y="738.6" width="2.2" height="19" fill="#f8d98e"/>
<path d="M601.2 741.6 V737 H604.6 Q604.6 733.8 607 733.8 Q609.4 733.8 609.4 737 H612.6 V741.6 Z" fill="#fafafa" stroke="#6a6a6a" stroke-width="1.4"/>
<rect x="609.6" y="746.2" width="9.4" height="12.6" fill="#fafafa" stroke="#404040" stroke-width="1.6"/>
<!-- submenu chevrons -->
<path d="M993.4 793.4 L1001 800 L993.4 806.6 M993.4 841.2 L1001 847.8 L993.4 854.4" stroke="#333" stroke-width="1.6"/>
</svg>
<svg style="position:absolute;left:0px;top:0px;" width="1536" height="1026" viewBox="0 0 1536 1026" fill="none"><path d="M599.4 904.2 A4.9 4.9 0 0 1 599.4 894.4 H605.8 A4.9 4.9 0 0 1 605.8 904.2 M607.4 899.2 A4.9 4.9 0 0 0 607.4 909 H613.8 A4.9 4.9 0 0 0 613.8 899.2" stroke="#333" stroke-width="1.6" stroke-linecap="round"/><path d="M599.4 952.2 A4.9 4.9 0 0 1 599.4 942.4 H605.8 A4.9 4.9 0 0 1 605.8 952.2 M607.4 947.2 A4.9 4.9 0 0 0 607.4 957 H613.8 A4.9 4.9 0 0 0 613.8 947.2" stroke="#333" stroke-width="1.6" stroke-linecap="round"/><path d="M599.4 1000.2 A4.9 4.9 0 0 1 599.4 990.4 H605.8 A4.9 4.9 0 0 1 605.8 1000.2 M607.4 995.2 A4.9 4.9 0 0 0 607.4 1005 H613.8 A4.9 4.9 0 0 0 613.8 995.2" stroke="#333" stroke-width="1.6" stroke-linecap="round"/></svg>
<div style="position:absolute;left:634.3px;top:606px;width:10.2px;height:1.3px;background:#333;"></div>
<div style="position:absolute;left:658.1px;top:659.6px;width:6.7px;height:1.3px;background:#333;"></div>
<div style="position:absolute;left:634.2px;top:708.2px;width:11.7px;height:1.3px;background:#333;"></div>
<div style="position:absolute;left:634.2px;top:810px;width:12.7px;height:1.3px;background:#333;"></div>
<div style="position:absolute;left:703.8px;top:858px;width:9.8px;height:1.3px;background:#333;"></div>
<div style="position:absolute;left:688px;top:1009px;width:9.3px;height:1.3px;background:#333;"></div>
</body></html>
